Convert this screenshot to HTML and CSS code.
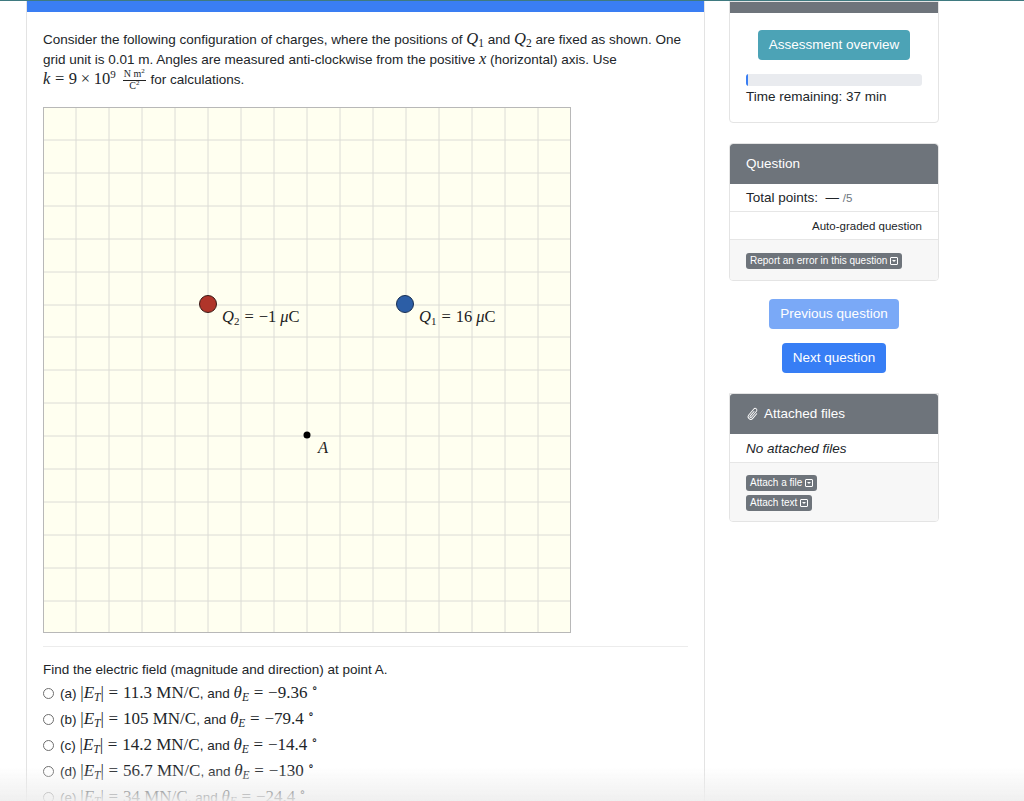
FILE: index.html
```html
<!DOCTYPE html>
<html>
<head>
<meta charset="utf-8">
<link rel="stylesheet" href="styles.css">
</head>
<body>
<div class="topline"></div>
<div class="layout">
  <main class="qcard">
    <div class="qhead"></div>
    <div class="qbody">
      <p class="intro">Consider the following configuration of charges, where the positions of <span class="m"><i>Q</i><sub>1</sub></span> and <span class="m"><i>Q</i><sub>2</sub></span> are fixed as shown. One grid unit is 0.01 m. Angles are measured anti-clockwise from the positive <span class="m"><i>x</i></span> (horizontal) axis. Use <span class="m nowrap"><i>k</i><span class="rel">=</span>9<span class="bin">×</span>10<sup>9</sup> <span class="frac"><span class="num">N m<sup>2</sup></span><span class="den">C<sup>2</sup></span></span></span> for calculations.</p>
      <div class="figure">
        <svg class="grid" width="528" height="526" viewBox="0 0 528 526">
          <g class="lines">
            <line x1="33" y1="0" x2="33" y2="526"/><line x1="66" y1="0" x2="66" y2="526"/><line x1="99" y1="0" x2="99" y2="526"/><line x1="132" y1="0" x2="132" y2="526"/><line x1="165" y1="0" x2="165" y2="526"/><line x1="198" y1="0" x2="198" y2="526"/><line x1="231" y1="0" x2="231" y2="526"/><line x1="264" y1="0" x2="264" y2="526"/><line x1="297" y1="0" x2="297" y2="526"/><line x1="330" y1="0" x2="330" y2="526"/><line x1="363" y1="0" x2="363" y2="526"/><line x1="396" y1="0" x2="396" y2="526"/><line x1="429" y1="0" x2="429" y2="526"/><line x1="462" y1="0" x2="462" y2="526"/><line x1="495" y1="0" x2="495" y2="526"/>
            <line x1="0" y1="33" x2="528" y2="33"/><line x1="0" y1="66" x2="528" y2="66"/><line x1="0" y1="99" x2="528" y2="99"/><line x1="0" y1="132" x2="528" y2="132"/><line x1="0" y1="165" x2="528" y2="165"/><line x1="0" y1="198" x2="528" y2="198"/><line x1="0" y1="230" x2="528" y2="230"/><line x1="0" y1="263" x2="528" y2="263"/><line x1="0" y1="296" x2="528" y2="296"/><line x1="0" y1="329" x2="528" y2="329"/><line x1="0" y1="362" x2="528" y2="362"/><line x1="0" y1="395" x2="528" y2="395"/><line x1="0" y1="428" x2="528" y2="428"/><line x1="0" y1="461" x2="528" y2="461"/><line x1="0" y1="494" x2="528" y2="494"/>
          </g>
          <rect class="frame" x="0.5" y="0.5" width="527" height="525"/>
          <circle class="neg" cx="165" cy="197" r="8.5"/>
          <circle class="pos" cx="362" cy="197" r="8.5"/>
          <circle class="pt" cx="264" cy="328" r="3.5"/>
          <text class="lbl" x="179" y="215"><tspan font-style="italic">Q</tspan><tspan font-size="11" dy="3">2</tspan><tspan dy="-3" dx="5">=</tspan><tspan dx="5">−1</tspan><tspan dx="4" font-style="italic">μ</tspan><tspan>C</tspan></text>
          <text class="lbl" x="376" y="215"><tspan font-style="italic">Q</tspan><tspan font-size="11" dy="3">1</tspan><tspan dy="-3" dx="5">=</tspan><tspan dx="5">16</tspan><tspan dx="4" font-style="italic">μ</tspan><tspan>C</tspan></text>
          <text class="lbl" x="275" y="346" font-style="italic">A</text>
        </svg>
      </div>
      <hr class="sep">
      <p class="ask">Find the electric field (magnitude and direction) at point A.</p>
      <ul class="opts">
        <li><span class="radio"></span>(a) <span class="m">|<i>E</i><sub><i>T</i></sub>|<span class="rel">=</span>11.3 MN/C</span>, and <span class="m"><i>θ</i><sub><i>E</i></sub><span class="rel">=</span>−9.36 <sup class="deg">∘</sup></span></li>
        <li><span class="radio"></span>(b) <span class="m">|<i>E</i><sub><i>T</i></sub>|<span class="rel">=</span>105 MN/C</span>, and <span class="m"><i>θ</i><sub><i>E</i></sub><span class="rel">=</span>−79.4 <sup class="deg">∘</sup></span></li>
        <li><span class="radio"></span>(c) <span class="m">|<i>E</i><sub><i>T</i></sub>|<span class="rel">=</span>14.2 MN/C</span>, and <span class="m"><i>θ</i><sub><i>E</i></sub><span class="rel">=</span>−14.4 <sup class="deg">∘</sup></span></li>
        <li><span class="radio"></span>(d) <span class="m">|<i>E</i><sub><i>T</i></sub>|<span class="rel">=</span>56.7 MN/C</span>, and <span class="m"><i>θ</i><sub><i>E</i></sub><span class="rel">=</span>−130 <sup class="deg">∘</sup></span></li>
        <li><span class="radio"></span>(e) <span class="m">|<i>E</i><sub><i>T</i></sub>|<span class="rel">=</span>34 MN/C</span>, and <span class="m"><i>θ</i><sub><i>E</i></sub><span class="rel">=</span>−24.4 <sup class="deg">∘</sup></span></li>
      </ul>
    </div>
  </main>
  <aside class="side">
    <section class="card">
      <div class="cut"></div>
      <div class="timer">
        <a class="btn info">Assessment overview</a>
        <div class="progress"><div class="bar"></div></div>
        <div class="time">Time remaining: 37 min</div>
      </div>
    </section>
    <section class="card gap">
      <div class="chead">Question</div>
      <div class="row">Total points: &nbsp;— <span class="muted">/5</span></div>
      <div class="row right small">Auto-graded question</div>
      <div class="foot"><span class="badge">Report an error in this question <span class="ico"></span></span></div>
    </section>
    <div class="navbtns">
      <a class="btn primary disabled">Previous question</a>
      <a class="btn primary">Next question</a>
    </div>
    <section class="card">
      <div class="chead"><svg class="clip" width="14" height="14" viewBox="0 0 16 16"><path d="M4.5 3a2.5 2.5 0 0 1 5 0v9a1.5 1.5 0 0 1-3 0V5a.5.5 0 0 1 1 0v7a.5.5 0 0 0 1 0V3a1.5 1.5 0 1 0-3 0v9a2.5 2.5 0 0 0 5 0V5a.5.5 0 0 1 1 0v7a3.5 3.5 0 1 1-7 0V3z" fill="#fff" transform="rotate(40 8 8)"/></svg>Attached files</div>
      <div class="row italic">No attached files</div>
      <div class="foot stack">
        <span class="badge">Attach a file <span class="ico"></span></span>
        <span class="badge">Attach text <span class="ico"></span></span>
      </div>
    </section>
  </aside>
</div>
<div class="fade"></div>
</body>
</html>
```

FILE: styles.css
```css
* { box-sizing: border-box; }
html, body { margin: 0; padding: 0; background: #fff; }
body {
  font-family: "Liberation Sans", Arial, Helvetica, sans-serif;
  font-size: 13.5px;
  color: #212529;
  overflow: hidden;
}
.topline { height: 1px; background: #3f7a80; }
.layout {
  display: flex;
  align-items: flex-start;
  padding-left: 26px;
  gap: 24px;
}
.qcard {
  width: 679px;
  border: 1px solid #e3e3e3;
  border-top: none;
  min-height: 900px;
}
.qhead { height: 11px; background: #3a7ef3; }
.qbody { padding: 18px 16px 0 16px; }
.intro { margin: 0; line-height: 20px; }
.m { font-family: "Liberation Serif", "DejaVu Serif", serif; font-size: 16.5px; line-height: 1; }
.m i { font-style: italic; }
.m sub { font-size: 11.5px; vertical-align: -3px; line-height: 0; }
.m sup { font-size: 11px; vertical-align: 6px; line-height: 0; }
.m sup.deg { font-size: 12px; vertical-align: 6px; }
.opts .m { font-size: 17px; }
.rel { margin: 0 0.28em; }
.bin { margin: 0 0.22em; }
.nowrap { white-space: nowrap; }
.frac {
  display: inline-block;
  vertical-align: middle;
  text-align: center;
  font-size: 10px;
  line-height: 8.5px;
  margin: -5px 1px -5px 3px;
}
.frac .num { display: block; border-bottom: 1px solid #222; padding: 0 1px 1px; }
.frac .den { display: block; padding-top: 1px; }
.frac sup { font-size: 7px; vertical-align: 4px; }
.figure { margin-top: 17px; line-height: 0; }
.grid { display: block; background: #fffff0; }
.lines line { stroke: #dcdcd6; stroke-width: 1; }
.frame { fill: none; stroke: #b8b8b8; stroke-width: 1; }
.neg { fill: #b0352a; stroke: #3a1a16; stroke-width: 1; }
.pos { fill: #2c5ea6; stroke: #172e52; stroke-width: 1; }
.pt { fill: #000; }
.lbl { font-family: "Liberation Serif", "DejaVu Serif", serif; font-size: 16.5px; fill: #222; }
.sep { border: 0; border-top: 1px solid #ececec; margin: 13px 0 0 0; }
.ask { margin: 13px 0 0 0; line-height: 20px; }
.opts { list-style: none; margin: 1px 0 0 0; padding: 0; }
.opts li { height: 26px; line-height: 26px; white-space: nowrap; }
.radio {
  display: inline-block;
  width: 11px; height: 11px;
  border: 1px solid #6e6e6e;
  border-radius: 50%;
  vertical-align: -1px;
  margin-right: 6px;
}
.side { width: 210px; }
.card {
  border: 1px solid #e4e4e4;
  border-radius: 0 0 4px 4px;
  background: #fff;
  overflow: hidden;
}
.card.gap { margin-top: 20px; border-radius: 4px; }
.cut { height: 11px; background: #6e747b; }
.timer { padding: 17px 16px 15px; text-align: center; }
.btn {
  display: inline-block;
  color: #fff;
  border-radius: 4px;
  font-size: 13.5px;
  line-height: 30px;
  height: 30px;
  padding: 0 11px;
}
.btn.info { background: #4ca3b6; }
.btn.primary { background: #377ef5; }
.btn.disabled { background: #7aa9f7; }
.progress {
  margin-top: 14px;
  height: 12px;
  background: #e9ebef;
  border-radius: 3px;
  overflow: hidden;
}
.bar { width: 2px; height: 100%; background: #3a7ef3; }
.time { text-align: left; line-height: 20px; margin-top: 1px; }
.chead {
  height: 40px;
  line-height: 40px;
  padding: 0 16px;
  background: #6e747b;
  color: #fff;
  font-size: 13.5px;
  display: flex;
  align-items: center;
  gap: 3px;
}
.card .chead { border-radius: 3px 3px 0 0; }
.row {
  padding: 0 16px;
  height: 28px;
  line-height: 28px;
  border-bottom: 1px solid #e6e6e6;
}
.row.right { text-align: right; }
.row.small { font-size: 11.5px; }
.row.italic { font-style: italic; height: 29px; line-height: 29px; }
.muted { color: #6c757d; font-size: 11.5px; }
.foot { background: #f7f7f7; padding: 12px 16px 11px; }
.foot.stack { display: flex; flex-direction: column; align-items: flex-start; gap: 4px; padding: 12px 16px 10px; }
.badge {
  display: inline-flex;
  align-items: center;
  gap: 3px;
  background: #6e747b;
  color: #fff;
  font-size: 10px;
  height: 16px;
  padding: 0 4px;
  border-radius: 3px;
}
.ico {
  display: inline-block;
  width: 8px; height: 8px;
  border: 1px solid #fff;
  border-radius: 1px;
  position: relative;
}
.ico::after {
  content: "";
  position: absolute;
  left: 1px; top: 2px;
  border-left: 2px solid transparent;
  border-right: 2px solid transparent;
  border-top: 2px solid #fff;
}
.navbtns {
  display: flex;
  flex-direction: column;
  align-items: center;
  gap: 14px;
  padding: 18px 0 20px;
}
.clip { margin-right: 1px; }
.fade {
  position: fixed;
  left: 0; right: 0; bottom: 0;
  height: 34px;
  background: linear-gradient(rgba(240,240,240,0), rgba(238,238,238,0.9));
  pointer-events: none;
}
```
